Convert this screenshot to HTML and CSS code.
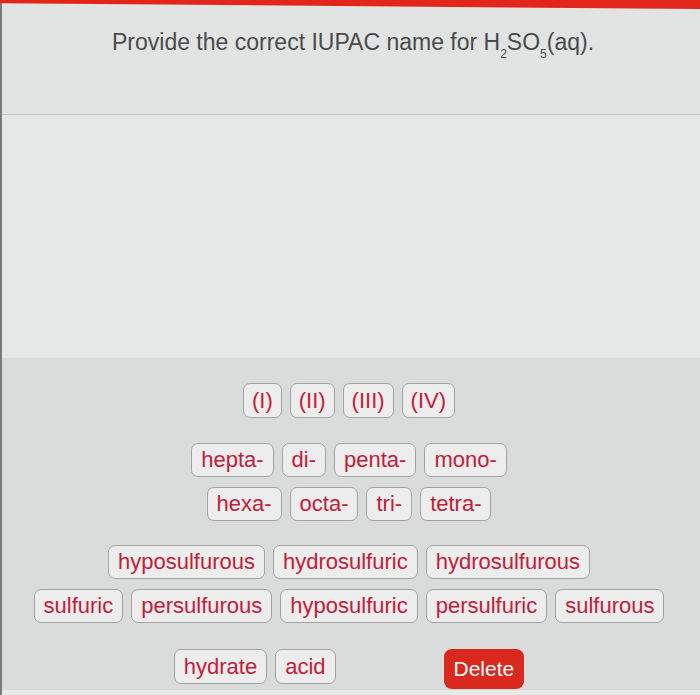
FILE: index.html
```html
<!DOCTYPE html>
<html>
<head>
<meta charset="utf-8">
<link rel="stylesheet" href="styles.css">
</head>
<body>
<div class="page">
  <div class="topbar"></div>
  <div class="frame">
    <div class="question">
      <p class="title">Provide the correct IUPAC name for H<sub>2</sub>SO<sub>5</sub>(aq).</p>
    </div>
    <div class="answer"></div>
    <div class="bank">
      <div class="group g1">
        <div class="row">
          <span class="tile">(I)</span><span class="tile">(II)</span><span class="tile">(III)</span><span class="tile">(IV)</span>
        </div>
      </div>
      <div class="group g2">
        <div class="row">
          <span class="tile">hepta-</span><span class="tile">di-</span><span class="tile">penta-</span><span class="tile">mono-</span>
        </div>
        <div class="row">
          <span class="tile">hexa-</span><span class="tile">octa-</span><span class="tile">tri-</span><span class="tile">tetra-</span>
        </div>
      </div>
      <div class="group g3">
        <div class="row">
          <span class="tile">hyposulfurous</span><span class="tile">hydrosulfuric</span><span class="tile">hydrosulfurous</span>
        </div>
        <div class="row">
          <span class="tile">sulfuric</span><span class="tile">persulfurous</span><span class="tile">hyposulfuric</span><span class="tile">persulfuric</span><span class="tile">sulfurous</span>
        </div>
      </div>
      <div class="group g4">
        <div class="row">
          <span class="tile tall">hydrate</span><span class="tile tall">acid</span><button class="delete">Delete</button>
        </div>
      </div>
    </div>
    <div class="footer"></div>
  </div>
</div>
</body>
</html>
```

FILE: styles.css
```css
* { box-sizing: border-box; }
html, body { margin: 0; padding: 0; }
body {
  width: 700px;
  height: 695px;
  overflow: hidden;
  background: #dcdedd;
  font-family: "Liberation Sans", Arial, sans-serif;
}
.page {
  width: 700px;
  height: 695px;
  display: flex;
  flex-direction: column;
}
.topbar {
  height: 9px;
  background: #e3261c;
  clip-path: polygon(0 0, 100% 0, 100% 100%, 0 35%);
  margin-bottom: -6px;
  position: relative;
  z-index: 1;
}
.frame {
  flex: 1;
  border-left: 2px solid #7a7b7b;
  display: flex;
  flex-direction: column;
}
.question {
  height: 111px;
  background: #e2e4e3;
  padding: 26px 0 0 110px;
}
.title {
  margin: 0;
  font-size: 23px;
  line-height: 26px;
  color: #4a4b4c;
}
.title sub {
  font-size: 12px;
  vertical-align: -8px;
  line-height: 0;
}
.answer {
  height: 244px;
  border-top: 1px solid #c4c6c5;
  background: #e6e8e7;
}
.bank {
  flex: 1;
  background: #dadcdb;
  padding-top: 25px;
  display: flex;
  flex-direction: column;
}
.group {
  display: flex;
  flex-direction: column;
  gap: 10px;
}
.g2 { margin-top: 25px; }
.g3 { margin-top: 24px; }
.g4 { margin-top: 26px; }
.row {
  display: flex;
  justify-content: center;
  align-items: flex-start;
  gap: 8px;
  padding-right: 4px;
}
.tile {
  height: 34px;
  line-height: 32px;
  padding: 0 9px;
  border: 1px solid #a2a3a3;
  border-radius: 7px;
  background: #ededed;
  color: #c2203a;
  font-size: 22px;
  white-space: nowrap;
}
.g1 .tile { height: 35px; line-height: 33px; padding: 0 8px; }
.tile.tall { height: 35px; line-height: 33px; }
.delete {
  margin-left: 100px;
  height: 40px;
  padding: 0 10px;
  border: none;
  border-radius: 8px;
  background: #d9281e;
  color: #ffffff;
  font-family: "Liberation Sans", Arial, sans-serif;
  font-size: 21px;
}
.footer {
  height: 5px;
  background: #e8e9e9;
}
```
